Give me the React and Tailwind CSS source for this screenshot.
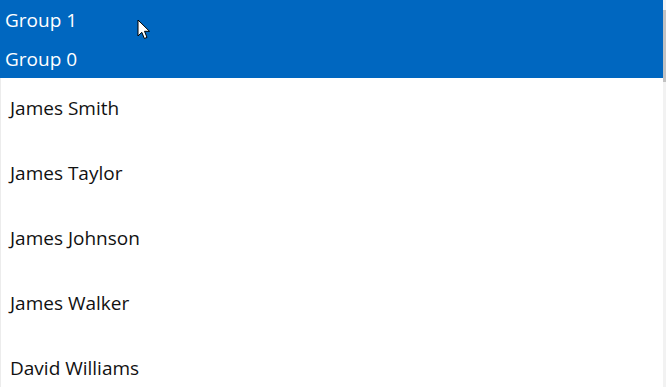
import React from 'react';

const groups = ['Group 1', 'Group 0'];
const people = ['James Smith', 'James Taylor', 'James Johnson', 'James Walker', 'David Williams'];

const Cursor = () => (
  <svg
    className="absolute left-[137px] top-[19px]"
    width="14"
    height="22"
    viewBox="0 0 14 22"
  >
    <path
      d="M1 1 L1 17 L4.8 13.3 L7.4 19.5 L10 18.4 L7.5 12.3 L12.5 12.3 Z"
      fill="#fff"
      stroke="#000"
      strokeWidth="1"
      strokeLinejoin="miter"
    />
  </svg>
);

export default function App() {
  return (
    <div
      className="relative flex w-[666px] h-[387px] overflow-hidden bg-white"
      style={{ fontFamily: '"Open Sans", "Noto Sans", sans-serif' }}
    >
      <div className="flex-1 flex flex-col">
        {/* Header groups */}
        <div className="bg-[#0067c0] text-white">
          {groups.map(g => (
            <div key={g} className="h-[39px] flex items-center pl-[5px] pt-[2px] text-[19px]">
              {g}
            </div>
          ))}
        </div>

        {/* Items */}
        <div className="flex-1 border-l border-[#ececec]">
          {people.map(p => (
            <div key={p} className="h-[65px] flex items-center pl-[9px] pb-[4px] text-[19px] text-[#111]">
              {p}
            </div>
          ))}
        </div>
      </div>

      {/* Scrollbar */}
      <div className="w-[3px] bg-[#f2f2f2] flex flex-col">
        <div className="mt-[10px] h-[72px] bg-[#c2c2c2]" />
      </div>

      <Cursor />
    </div>
  );
}
